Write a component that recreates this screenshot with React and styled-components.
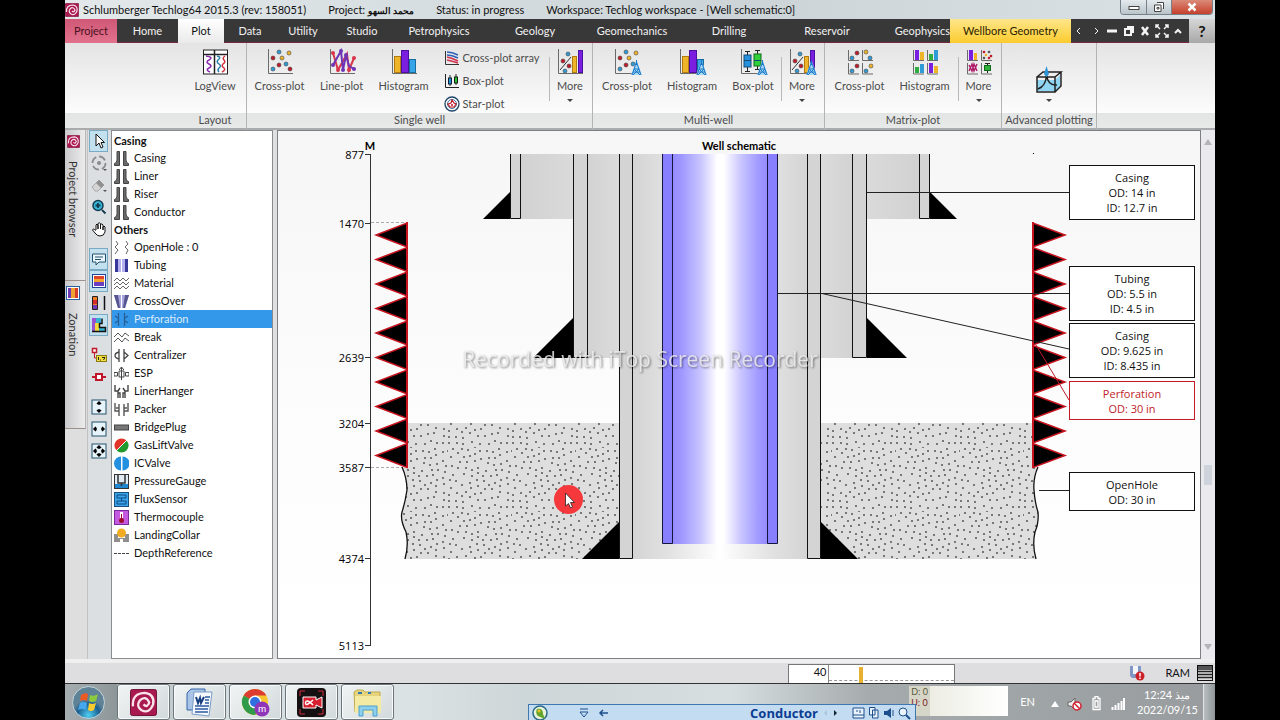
import React, { useState } from "react";
import styled, { createGlobalStyle } from "styled-components";

const GlobalStyle = createGlobalStyle`
  * {
    box-sizing: border-box;
  }
  body {
    margin: 0;
    background: #000;
    font-family: Lato, "Open Sans", sans-serif;
    font-size: 11px;
    line-height: 14px;
    color: #111;
  }
  button {
    margin: 0;
    padding: 0;
    border: 0;
    background: none;
    font: inherit;
    color: inherit;
  }
  ul {
    margin: 0;
    padding: 0;
    list-style: none;
  }
  svg {
    display: block;
    flex: none;
  }
`;

const BLUE = "#2f9bd6";
const RED = "#c01828";
const YELLOW = "#f0b429";
const PURPLE = "#7a1fe0";
const GREEN = "#2fae3f";

/* ---------- ribbon icons ---------- */

const Axes = () => <path d="M1.500 0V24.500H26" fill="none" stroke="#6b6b6b" />;

const Dots = ({ list }) =>
  list.map(([x, y, c]) => <circle key={`${x}-${y}`} cx={x} cy={y} r="2" fill={c} stroke="#444" strokeWidth=".6" />);

const Derrick = () => (
  <g fill="none" stroke="#1878c8">
    <path d="M22.500 11L17 26H28L22.500 11Z" fill="#a9d8f5" stroke="none" />
    <path d="M22.500 11V16M22.500 13L18 26M22.500 13L27 26M20 20H25M19 23H26M20 20L26 26M25 20L19 26" />
  </g>
);

const RibbonSvg = styled.svg`
  width: 26px;
  height: 26px;
  overflow: visible;
`;

const scatter = [
  [12, 3, BLUE], [22, 4, YELLOW], [6, 9, RED], [15, 9, YELLOW], [12, 16, RED],
  [19, 15, BLUE], [6, 20, BLUE], [23, 20, RED],
];

const LogViewIcon = () => (
  <RibbonSvg viewBox="0 0 26 26">
    <rect x="1.500" y="1" width="24" height="24" fill="#fff" stroke="#222" />
    <path d="M1.500 5.500H25.500M12.500 1V25" stroke="#222" strokeWidth="1.500" fill="none" />
    <path d="M4 7q8 1 3 4q-4 2 0 4q4 2 0 4q-4 2 1 4" stroke="#8a2bb0" strokeWidth="1.500" fill="none" />
    <path d="M15 7q5 1 1 4q-2 2 1 4q3 2 0 4q-2 2 0 4" stroke="#2a7fa8" strokeWidth="1.500" fill="none" />
    <path d="M23 7q-3 2-1 4q2 2-1 4q-2 2 1 4q2 2-2 4" stroke="#d03040" strokeWidth="1.500" fill="none" />
  </RibbonSvg>
);

const ScatterIcon = ({ derrick }) => (
  <RibbonSvg viewBox="0 0 26 26">
    <Axes />
    <Dots list={scatter} />
    {derrick && <Derrick />}
  </RibbonSvg>
);

const LinePlotIcon = () => (
  <RibbonSvg viewBox="0 0 26 26">
    <Axes />
    <path d="M4 4L9 21L18 5L20 21L25 9" stroke="#d8344a" strokeWidth="2" fill="none" />
    <path d="M4 16L12 2L14 21L17 6L20 17L25 20" stroke="#6d35b5" strokeWidth="2" fill="none" />
    {[[4, 4], [9, 21], [20, 21], [25, 9]].map(([x, y]) => <circle key={x} cx={x} cy={y} r="2" fill="#d8344a" />)}
    {[[4, 16], [14, 21], [12, 2], [17, 6], [25, 20]].map(([x, y]) => <circle key={x + y} cx={x} cy={y} r="2" fill="#6d35b5" />)}
  </RibbonSvg>
);

const HistogramIcon = ({ derrick }) => (
  <RibbonSvg viewBox="0 0 26 26">
    <Axes />
    <rect x="3.500" y="7.500" width="6" height="16" fill={YELLOW} stroke="#b07c10" />
    <rect x="10.500" y="1.500" width="7" height="22" fill={PURPLE} stroke="#4d0fa0" />
    <rect x="18.500" y="10.500" width="6" height="13" fill="#35a5e8" stroke="#176ca0" />
    {derrick && <Derrick />}
  </RibbonSvg>
);

const BoxPlotIcon = () => (
  <RibbonSvg viewBox="0 0 26 26">
    <Axes />
    <path d="M7.500 2V23M5 2.500H10M5 22.500H10M17.500 1V21M15 1.500H20M15 20.500H20" stroke="#222" fill="none" />
    <rect x="4" y="6" width="7" height="12" fill="#2690dc" stroke="#124a78" />
    <rect x="14" y="5" width="7" height="12" fill="#2fd03a" stroke="#0f6a18" />
    <path d="M4 11.500H11M14 11.500H21" stroke="#124a78" />
    <Derrick />
  </RibbonSvg>
);

const MoreIcon = ({ derrick }) => (
  <RibbonSvg viewBox="0 0 26 26">
    <Axes />
    <Dots list={[[11, 5, BLUE], [6, 12, RED], [12, 17, RED], [8, 22, BLUE]]} />
    <path d="M3 21L14 8" stroke="#333" />
    <rect x="15.500" y="7.500" width="4" height="16" fill={YELLOW} stroke="#b07c10" />
    <rect x="21.500" y="1.500" width="4" height="22" fill={PURPLE} stroke="#4d0fa0" />
    {derrick && <Derrick />}
  </RibbonSvg>
);

const QuadAxes = () => (
  <path d="M1.500 1V11.500H12M15.500 1V11.500H26M1.500 14V25H12M15.500 14V25H26" fill="none" stroke="#6b6b6b" />
);

const MatrixScatterIcon = () => (
  <RibbonSvg viewBox="0 0 26 26">
    <QuadAxes />
    <Dots list={[[5, 9, BLUE], [10, 4, RED], [19, 3, YELLOW], [23, 9, BLUE], [5, 22, BLUE], [10, 17, RED], [19, 22, BLUE], [24, 17, YELLOW]]} />
  </RibbonSvg>
);

const MatrixHistogramIcon = () => (
  <RibbonSvg viewBox="0 0 26 26">
    <QuadAxes />
    {[[3, 1, PURPLE], [8, 3, YELLOW], [17, 5, GREEN], [22, 1, BLUE], [3, 18, GREEN], [8, 15, BLUE], [17, 14, PURPLE], [22, 17, YELLOW]].map(([x, y, c]) => (
      <rect key={`${x}${y}`} x={x} y={y} width="4" height={(y > 12 ? 24 : 11) - y} fill={c} />
    ))}
  </RibbonSvg>
);

const MatrixMoreIcon = () => (
  <RibbonSvg viewBox="0 0 26 26">
    <QuadAxes />
    <rect x="3" y="1" width="4" height="10" fill={PURPLE} />
    <rect x="8" y="4" width="3" height="7" fill={YELLOW} />
    {[[18, 3, RED], [23, 3, "#555"], [20, 6, YELLOW], [25, 7, RED], [18, 9, "#555"], [23, 9, RED]].map(([x, y, c]) => (
      <circle key={`${x}${y}`} cx={x} cy={y} r="1.300" fill={c} />
    ))}
    <path d="M3 16L6 22L8 15L11 22M3 22L6 15L8 22L11 15" stroke="#b01868" strokeWidth="1.400" fill="none" />
    <path d="M21.500 14V24M19 14.500H24" stroke="#222" />
    <rect x="18.500" y="16.500" width="6" height="5" fill="#2fb03a" stroke="#0f6a18" />
  </RibbonSvg>
);

const CubeIcon = () => (
  <RibbonSvg viewBox="0 0 26 26">
    <path d="M1 13H19L24 8V19L19 24H1Z" fill="#8fd4f0" />
    <path d="M1 10H19V25H1ZM1 10L7 5H25L19 10M25 5V19L19 25" fill="none" stroke="#222" strokeWidth="1.500" />
    <path d="M2 22Q10 19 10.500 8Q12 19 21 18" fill="none" stroke="#222" strokeWidth="1.500" />
    <path d="M10.500 -1L8 7L10.500 10L13 7Z" fill="#2b95d8" />
  </RibbonSvg>
);

const CrossArrayIcon = () => (
  <svg width="16" height="16" viewBox="0 0 16 16">
    <path d="M1.500 1V14.500H15" fill="none" stroke="#333" />
    <path d="M3 2Q8 2 14 5M3 5Q8 5 14 8" stroke="#2b62b8" strokeWidth="1.500" fill="none" />
    <path d="M3 7Q8 8 14 11M3 10Q8 11 14 13" stroke="#d0304a" strokeWidth="1.500" fill="none" />
  </svg>
);

const SmallBoxIcon = () => (
  <svg width="16" height="16" viewBox="0 0 16 16">
    <path d="M1.500 1V14.500H15M6 2V13M12 1V12" fill="none" stroke="#222" />
    <rect x="4.500" y="5" width="3" height="6" fill="#2690dc" stroke="#123" />
    <rect x="10.500" y="4" width="3" height="6" fill="#2fc03a" stroke="#121" />
  </svg>
);

const StarPlotIcon = () => (
  <svg width="16" height="16" viewBox="0 0 16 16">
    <circle cx="8" cy="8" r="7" fill="#fff" stroke="#1d4468" strokeWidth="1.300" />
    <circle cx="8" cy="8" r="4.500" fill="none" stroke="#3b6c98" />
    <path d="M8 4L10 7L12 8L10 11L6 11L4 8L7 7Z" fill="none" stroke={RED} strokeWidth="1.200" />
    <circle cx="8" cy="9" r="1" fill={RED} />
  </svg>
);

const SwirlIcon = ({ size = 14 }) => (
  <svg width={size} height={size} viewBox="0 0 14 14">
    <rect x=".25" y=".25" width="13.500" height="13.500" rx="1" fill="#a8194f" stroke="#6e1034" strokeWidth=".5" />
    <path d="M1.500 9Q1 2 8 2Q13 3 12 8Q10 13 6 11Q3 9 5 6Q8 3 10 7Q9 10 7 8" fill="none" stroke="#fbe3ea" strokeWidth="1.200" />
  </svg>
);

/* ---------- frame ---------- */

const Window = styled.div`
  display: flex;
  flex-direction: column;
  min-height: 100vh;
  margin: 0 65px;
  background: #dfdfe2;
`;

const TitleBar = styled.header`
  display: flex;
  align-items: center;
  height: 19px;
  background: linear-gradient(90deg, #e3e9eb, #d3dadd 40%, #ccd4d8 60%, #dbe2e5);
`;

const TitleText = styled.span`
  margin-left: ${(props) => props.$gap}px;
  white-space: nowrap;
  b {
    font-size: 9px;
    line-height: 1;
  }
`;

const WindowButtons = styled.div`
  display: flex;
  align-self: flex-start;
  height: 15px;
  margin-left: auto;
  margin-right: 2px;
  border: 1px solid #76828a;
  border-top: 0;
  border-radius: 0 0 4px 4px;
  overflow: hidden;
`;

const WindowButton = styled.button`
  display: flex;
  align-items: center;
  justify-content: center;
  width: ${(props) => (props.$close ? 41 : 25)}px;
  background: ${(props) => (props.$close ? "linear-gradient(#dc8a78, #c4402c)" : "linear-gradient(#e4eaed, #b9c4ca)")};
  & + & {
    border-left: 1px solid #76828a;
  }
`;

const MenuBar = styled.nav`
  display: flex;
  height: 24px;
  background: #393839;
  color: #f2f2f2;
  box-shadow: inset 0 -1px #7a2540;
`;

const tabLook = {
  project: "background: linear-gradient(#cf5876, #e2718c); color: #4a0f20;",
  active: "background: linear-gradient(#fff, #eaeaea); color: #111;",
  context: "background: linear-gradient(#ffe68a, #fbcb2e); color: #2a2200;",
};

const MenuTab = styled.button`
  flex: ${(props) => props.$size} 1 0;
  min-width: 0;
  padding-bottom: 1px;
  overflow: hidden;
  white-space: nowrap;
  text-align: ${(props) => (props.$end ? "right" : "center")};
  ${(props) => tabLook[props.$look]}
`;

const MenuTools = styled.div`
  display: flex;
  flex: none;
  align-items: center;
  justify-content: space-between;
  width: 118px;
  padding: 0 4px 0 1px;
`;

const HelpButton = styled.button`
  flex: none;
  width: 26px;
  background: linear-gradient(#d6d6d6, #a8a8a8);
  color: #111;
  font-size: 16px;
  font-weight: 700;
`;

const Ribbon = styled.section`
  display: flex;
  height: 87px;
  padding-left: 119px;
  background: linear-gradient(#e4e4e4, #f0f0f0 40%, #fcfcfc 80%, #e3e5e5 81%, #e8eaea 98%, #a9abad 98%);
  color: #4c4c4c;
`;

const Group = styled.div`
  width: ${(props) => props.$width}px;
  border-right: 1px solid #b4b4b4;
`;

const GroupBody = styled.div`
  display: flex;
  justify-content: center;
  height: 70px;
`;

const GroupLabel = styled.div`
  text-align: center;
  white-space: nowrap;
`;

const Tool = styled.button`
  display: flex;
  flex-direction: column;
  align-items: center;
  gap: 4px;
  width: ${(props) => props.$width}px;
  padding-top: ${(props) => (props.$low ? 24 : 6)}px;
  white-space: nowrap;
`;

const Caret = styled.span`
  margin-top: 2px;
  border: 3px solid transparent;
  border-top-color: #444;
`;

const Divider = styled.span`
  width: 1px;
  margin: 14px 0 12px;
  background: #b9b9b9;
`;

const SmallTools = styled.div`
  width: 114px;
  padding: 3px 0 0 9px;
`;

const SmallTool = styled.button`
  display: flex;
  align-items: center;
  gap: 3px;
  height: 23px;
  white-space: nowrap;
`;

/* ---------- workspace ---------- */

const Workspace = styled.main`
  display: flex;
  flex: 1;
`;

const DockTabs = styled.div`
  display: flex;
  flex-direction: column;
  width: 23px;
  padding-right: 1px;
  background: #dededf;
  border-right: 1px solid #c2c2c4;
`;

const DockTab = styled.button`
  display: flex;
  flex-direction: column;
  align-items: center;
  gap: 13px;
  height: ${(props) => (props.$first ? 151 : 148)}px;
  padding: 5px 4px 0 0;
  border-bottom: 1px solid #9c8f8c;
  border-right: 1px solid #b5b5b5;
  background: linear-gradient(90deg, #c9c9cb, #ececed);
  color: #333;
  span {
    writing-mode: vertical-rl;
    white-space: nowrap;
  }
`;

const Tools = styled.div`
  display: flex;
  flex-direction: column;
  gap: 8px;
  width: 23px;
  padding: 0 1px;
  background: #dcdfe2;
`;

const ToolButton = styled.button`
  display: flex;
  align-items: center;
  justify-content: center;
  width: 19px;
  height: 22px;
  border: 1px solid ${(props) => (props.$on ? "#7aa9c4" : "transparent")};
  background: ${(props) => (props.$on ? "#c3e0ef" : "transparent")};
`;

const ItemPanel = styled.aside`
  width: 162px;
  margin-right: 4px;
  padding-top: 1px;
  border: 1px solid #8a8c8e;
  background: #fff;
`;

const ItemHeading = styled.h2`
  margin: 0;
  padding-left: 2px;
  font-size: 11px;
  line-height: 17px;
`;

const Item = styled.button`
  display: flex;
  align-items: center;
  gap: 5px;
  width: 100%;
  height: 18px;
  padding-left: 2px;
  white-space: nowrap;
  background: ${(props) => (props.$selected ? "#3397ea" : "none")};
  color: ${(props) => (props.$selected ? "#d9ecfb" : "#111")};
`;

const Canvas = styled.section`
  flex: 1;
  min-width: 0;
  border: 1px solid #7d8083;
  background: linear-gradient(#f6f6f6, #fdfdfd 60%, #fff);
  svg {
    width: 100%;
    height: auto;
  }
`;

const ScrollTrack = styled.div`
  display: flex;
  flex-direction: column;
  align-items: center;
  justify-content: space-between;
  width: 14px;
  padding: 5px 0;
  background: #e9e9ee;
`;

const ScrollArrow = styled.button`
  border: 4px solid transparent;
  border-${(props) => (props.$up ? "bottom" : "top")}: 6px solid #b3b3b8;
`;

const ScrollThumb = styled.span`
  width: 8px;
  height: 20px;
  margin-top: 160px;
  background: #cfd3dc;
`;

const StatusBar = styled.footer`
  display: flex;
  align-items: center;
  justify-content: flex-end;
  height: 25px;
  padding: 4px 2px 0 0;
  border-bottom: 1px solid #333;
  background: linear-gradient(#efeff0 4px, #dedee1 4px);
`;

const ScaleBox = styled.div`
  display: flex;
  align-self: flex-end;
  width: 167px;
  height: 19px;
  margin-right: 174px;
  border: 1px solid #777;
  border-bottom: 0;
  background: #fff;
`;

const ScaleValue = styled.span`
  width: 40px;
  padding-right: 2px;
  border-right: 1px solid #888;
  text-align: right;
`;

const ScalePlot = styled.span`
  flex: 1;
  margin-bottom: 2px;
  padding: 2px 0 0 30px;
  border-bottom: 1px dashed #999;
  i {
    display: block;
    width: 4px;
    height: 16px;
    background: #e8b030;
  }
`;

const StatusButton = styled.button`
  display: flex;
  align-items: center;
  gap: 7px;
  margin-left: ${(props) => props.$gap || 0}px;
`;

/* ---------- desktop taskbar ---------- */

const Taskbar = styled.footer`
  position: relative;
  display: flex;
  height: 36px;
  background: linear-gradient(90deg, #9da5a8 0, #d6dfe0 14%, #dbe2e3 30%, #cdd6d8 40%, #d7dedf 58%, #a5abad 70%, #989c9e);
`;

const StartButton = styled.button`
  display: flex;
  align-items: center;
  justify-content: center;
  width: 52px;
  padding-right: 6px;
  background: linear-gradient(90deg, #a5adb0, #8d9699);
`;

const TaskButton = styled.button`
  display: flex;
  align-items: center;
  justify-content: center;
  width: 53px;
  margin-right: 3px;
  border: 1px solid #6d777b;
  border-radius: 3px;
  background: linear-gradient(135deg, #f1f4f4, #d2d9da);
  box-shadow: inset 0 0 0 1px #f8fafa;
`;

const Tray = styled.div`
  display: flex;
  align-items: center;
  margin-left: auto;
  color: #fff;
`;

const NetMeter = styled.div`
  display: flex;
  align-self: flex-start;
  width: 99px;
  height: 30px;
  margin: 2px 12px 0 0;
  background: linear-gradient(90deg, #e8e8dc, #fff);
  color: #5a5a3a;
  font-size: 9px;
  line-height: 11px;
`;

const NetRates = styled.div`
  display: flex;
  flex-direction: column;
  width: 21px;
  padding-left: 2px;
  background: #d6d6c8;
  white-space: nowrap;
  span + span {
    color: #7c1420;
  }
`;

const TrayIcons = styled.div`
  display: flex;
  align-items: center;
  gap: 8px;
  margin: 3px 12px 0 16px;
`;

const Clock = styled.time`
  width: 60px;
  margin-right: 6px;
  text-align: center;
  line-height: 15px;
  white-space: nowrap;
`;

const ShowDesktop = styled.button`
  align-self: stretch;
  width: 12px;
  border-left: 1px solid #dfe3e4;
  background: linear-gradient(90deg, #b9bec0, #8f9496);
`;

/* floats over the taskbar */
const WordBar = styled.div`
  position: absolute;
  left: 463px;
  bottom: 0;
  display: flex;
  align-items: center;
  gap: 5px;
  width: 388px;
  height: 16px;
  padding: 0 3px;
  border: 1px solid #3f78b0;
  border-bottom: 0;
  background: #c4dcf2;
  color: #0b3d91;
`;

const WordField = styled.span`
  flex: 1;
  text-align: right;
  font-family: "Open Sans", sans-serif;
  font-size: 13px;
  font-weight: 700;
`;

/* ---------- list icons ---------- */

const pipes = <path d="M3 .5H5.500V14.500H.5V12.500Q3 12 3 9ZM9.500 .5H12V9Q12 12 14.500 12.500V14.500H9.500Z" fill="#6a6a6a" stroke="#444" />;

const itemIcons = {
  Casing: pipes,
  Liner: pipes,
  Riser: pipes,
  Conductor: pipes,
  "OpenHole : 0": <path d="M2 1L4 4L1 7L4 10L1 14M12 1L14 4L11 7L14 10L12 14" fill="none" stroke="#666" />,
  Tubing: (
    <>
      <path d="M1 1H14V14H1Z" fill="#b5b1f0" />
      <path d="M1 1H4V14H1ZM11 1H14V14H11Z" fill="#38389a" />
      <path d="M7 1H8V14H7Z" fill="#fff" />
    </>
  ),
  Material: <path d="M0 5L3 2L6 5L9 2L12 5L15 2M0 9L3 6L6 9L9 6L12 9L15 6M0 13L3 10L6 13L9 10L12 13L15 10" fill="none" stroke="#666" />,
  CrossOver: (
    <>
      <path d="M0 1H15L11 14H4Z" fill="#a9a7dd" />
      <path d="M0 1H4L6 14H4ZM15 1H11L9 14H11Z" fill="#55558f" />
      <path d="M7 1H8V14H7Z" fill="#fff" />
    </>
  ),
  Perforation: <path d="M4.500 1V14M1 4L4 6M1 11L4 9M10.500 1V14M14 4L11 6M14 11L11 9" fill="none" stroke="#255f95" strokeWidth="1.300" />,
  Break: <path d="M0 7L4 3L8 7L11 3L15 6M0 12L4 8L8 12L11 8L15 11" fill="none" stroke="#555" />,
  Centralizer: <path d="M5 1V14M10 1V14M5 4Q1 5 1 7.500Q1 10 5 11M10 4L14 7.500L10 11" fill="none" stroke="#444" strokeWidth="1.300" />,
  ESP: <path d="M7.500 1V14M5 5H10V11H5ZM5 4L7.500 1L10 4M0 6.500H3.500V10H0ZM11.500 6.500H15V10H11.500Z" fill="none" stroke="#444" />,
  LinerHanger: <path d="M1 1V7H4V14M4 7L6 4M14 1V7H11V14M11 7L9 4M4 9H6V14M11 9H9V14" fill="none" stroke="#444" strokeWidth="1.400" />,
  Packer: <path d="M1 1V9H5V14M5 2V9M14 1V9H10V14M10 2V9M2 6H5M10 6H13" fill="none" stroke="#555" strokeWidth="1.400" />,
  BridgePlug: <rect x=".5" y="5" width="14" height="5" fill="#777" stroke="#444" />,
  GasLiftValve: (
    <>
      <path d="M12.500 2.500A7 7 0 0 0 2.500 12.500Z" fill="#e2352a" />
      <path d="M12.500 2.500A7 7 0 0 1 2.500 12.500Z" fill="#22992c" />
      <path d="M1 14L14 1" stroke="#fff" />
    </>
  ),
  ICValve: <path d="M7 .5A7 7 0 0 0 7 14.500ZM8.500 .5A7 7 0 0 1 8.500 14.500Z" fill="#2490e0" />,
  PressureGauge: (
    <>
      <rect x=".5" y=".5" width="14" height="14" fill="#dfeaf2" stroke="#333" />
      <path d="M1 10H14V14H1Z" fill="#1f86d0" />
      <path d="M4 1V9H11V1M7.500 9V12" fill="none" stroke="#333" strokeWidth="1.500" />
    </>
  ),
  FluxSensor: (
    <>
      <rect x=".5" y=".5" width="14" height="14" fill="#3ba4ea" stroke="#1c4f78" />
      <path d="M3 3H12V6H3ZM3 9H12V12H3ZM7.500 6V9" fill="none" stroke="#0e4b80" />
    </>
  ),
  Thermocouple: (
    <>
      <rect x=".5" y=".5" width="14" height="14" fill="#c45ae0" stroke="#7a2a98" />
      <path d="M6 2H9V8H6Z" fill="#fff" />
      <path d="M7 4H8V9H7Z" fill="#a00c30" />
      <circle cx="7.500" cy="10.500" r="2.500" fill="#a00c30" />
    </>
  ),
  LandingCollar: (
    <>
      <path d="M0 6H4V10H11V6H15V14H9V11H6V14H0Z" fill="#8f8f8f" />
      <circle cx="7.500" cy="5" r="4.500" fill="#f2ac22" />
    </>
  ),
  DepthReference: <path d="M0 7.500H15" stroke="#444" strokeDasharray="3 1" />,
};

const casingItems = ["Casing", "Liner", "Riser", "Conductor"];
const otherItems = Object.keys(itemIcons).slice(4);

/* ---------- toolbar icons ---------- */

const arrows = {
  v: "M8 3V6M8 13V10M6 5L8 3L10 5M6 11L8 13L10 11",
  h: "M3 8H6M13 8H10M5 6L3 8L5 10M11 6L13 8L11 10",
};

const FitFrame = ({ d }) => (
  <>
    <rect x="1" y="1" width="14" height="14" fill="#e6f3f9" stroke="#24506a" />
    <path d={d} stroke="#000" strokeWidth="1.500" fill="none" />
  </>
);

const Bands = () => (
  <>
    <rect x="1.500" y="1.500" width="13" height="13" fill="#fff" stroke="#24449a" />
    <path d="M3 3H13V6H3Z" fill="#e0442c" />
    <path d="M3 6H13V9H3Z" fill="#f5a52c" />
    <path d="M3 9H13V13H3Z" fill="#6a3fc0" />
  </>
);

const toolGroups = [
  [
    { name: "Select", on: true, icon: <path d="M5 1V13L8 10L10 15L12 14L10 9.500H13.500Z" fill="#fff" stroke="#111" /> },
    {
      name: "Target",
      icon: (
        <>
          <circle cx="8" cy="8" r="6.500" fill="none" stroke="#8b8b8b" strokeWidth="1.800" strokeDasharray="7 3" />
          <circle cx="8" cy="8" r="2" fill="#8b8b8b" />
          <path d="M12 14H16L14 16Z" fill="#555" />
        </>
      ),
    },
    {
      name: "Erase",
      icon: (
        <>
          <path d="M1 10L8 3L13 8L7 14H4Z" fill="#d4d4d4" stroke="#aaa" />
          <path d="M8 3L13 8L10 11L5 6Z" fill="#8f8f8f" />
          <path d="M12 13H16L14 15Z" fill="#555" />
        </>
      ),
    },
    {
      name: "Zoom",
      icon: (
        <>
          <circle cx="7" cy="6.500" r="5" fill="#35b6d8" stroke="#143c50" strokeWidth="1.500" />
          <path d="M11 11L14.500 14.500M7 4V9M4.500 6.500H9.500" stroke="#143c50" strokeWidth="1.800" />
        </>
      ),
    },
    {
      name: "Pan",
      icon: <path d="M5 9V4Q6 2 7 4V8V2.500Q8 1 9.500 2.500V8V3.500Q11 2 12 4V9V6Q13 4 14 6V11Q13 15 9 15Q6 15 4 12L1.500 9Q2 7 5 9.500" fill="#fff" stroke="#111" />,
    },
  ],
  [
    { name: "Annotations", on: true, icon: <path d="M1.500 3H14.500V11H8L5 14V11H1.500ZM4 6H12M4 8.500H10" fill="#e9f7fd" stroke="#22506a" /> },
    { name: "Zones", on: true, icon: <Bands /> },
    {
      name: "Split",
      icon: (
        <>
          <path d="M1.500 1.500H6.500V14.500H1.500Z" fill="#f07a24" stroke="#222" />
          <path d="M2 5H6V9H2Z" fill="#d42b2b" />
          <path d="M2 10H6V14H2Z" fill="#7039b5" />
          <path d="M13.500 1V15" stroke="#111" strokeWidth="1.500" />
        </>
      ),
    },
    {
      name: "Colors",
      on: true,
      icon: (
        <>
          <path d="M1 1H10V6H8V10H14V14H1Z" fill="#36b0d0" />
          <path d="M1 1H5V14H1Z" fill="#9b50d0" />
          <path d="M4 6H8V14H4Z" fill="#f0d838" />
          <path d="M1 14.500H14.500V10.500H8.500V6.500H11V1.500" fill="none" stroke="#111" strokeWidth="1.500" />
        </>
      ),
    },
  ],
  [
    {
      name: "Values",
      icon: (
        <>
          <rect x="1.500" y="1.500" width="4" height="4" fill="#fff" stroke={RED} strokeWidth="1.500" />
          <path d="M3.500 6V11H6" stroke={RED} fill="none" />
          <rect x="5.500" y="8.500" width="10" height="6" fill="#f3e03c" stroke="#8a7c10" />
          <path d="M7.500 10V13M9 13H10M11 10.500H14L12.500 13" stroke="#222" fill="none" />
        </>
      ),
    },
    { name: "Node", icon: <path d="M1 8H5M11 8H15M5 5H11V11H5Z" fill="#fff" stroke={RED} strokeWidth="2" /> },
  ],
  [
    { name: "Fit height", icon: <FitFrame d={arrows.v} /> },
    { name: "Fit width", icon: <FitFrame d={arrows.h} /> },
    { name: "Fit all", icon: <FitFrame d={arrows.v + arrows.h} /> },
  ],
];

/* ---------- well schematic ---------- */

const TILE = 64;

// scattered points that wrap round the tile edges
const grains = (() => {
  let seed = 7;
  const rand = () => {
    seed = (seed * 16807) % 2147483647;
    return (seed / 2147483647) * TILE;
  };
  const wrap = (d) => Math.min(Math.abs(d), TILE - Math.abs(d));
  const out = [];
  for (let i = 0; i < 8000; i++) {
    const x = rand();
    const y = rand();
    if (out.every(([a, b]) => Math.hypot(wrap(a - x), wrap(b - y)) > 5.5)) out.push([x, y]);
  }
  return out.map(([x, y]) => [Math.floor(x), Math.floor(y)]);
})();

const depths = [[877, 154], [1470, 223], [2639, 357], [3204, 423], [3587, 467], [4374, 558], [5113, 645]];

const casings = [
  { left: 510, right: 930, wall: 11, bottom: 219, shoe: 27 },
  { left: 573, right: 867, wall: 15, bottom: 358, shoe: 40 },
  { left: 619, right: 821, wall: 14, bottom: 559, shoe: 37 },
];

const callouts = [
  { y: 165, lines: ["Casing", "OD: 14 in", "ID: 12.7 in"] },
  { y: 266, lines: ["Tubing", "OD: 5.5 in", "ID: 4.5 in"] },
  { y: 323, lines: ["Casing", "OD: 9.625 in", "ID: 8.435 in"] },
  { y: 381, lines: ["Perforation", "OD: 30 in"], color: "#c01c2a" },
  { y: 472, lines: ["OpenHole", "OD: 30 in"] },
];

const SvgText = styled.text`
  font-family: "Open Sans", sans-serif;
  font-size: 11px;
  text-anchor: ${(props) => props.$anchor || "middle"};
`;

const SvgTitle = styled.text`
  font-size: 11px;
  font-weight: 700;
  text-anchor: middle;
`;

const Watermark = styled(SvgText)`
  font-size: 21px;
  fill: #f2f2f2;
  fill-opacity: 0.8;
  filter: drop-shadow(1px 1px 1px rgba(0, 0, 0, 0.6));
`;

const CasingShape = ({ left, right, wall, bottom, shoe }) => (
  <g>
    <rect x={left} y="154" width={right - left} height={bottom - 154} fill="url(#steel)" />
    {[left, right - wall].map((x) => (
      <path key={x} d={`M${x + 0.5} 154V${bottom - 0.5}H${x + wall - 0.5}V154`} fill="#d4d4d4" stroke="#111" />
    ))}
    <path d={`M${left} ${bottom}H${left - shoe}L${left} ${bottom - shoe}ZM${right} ${bottom}H${right + shoe}L${right} ${bottom - shoe}Z`} />
  </g>
);

const Perforations = ({ base, tip }) => (
  <g stroke="#c8141e" strokeWidth="1.500">
    {Array.from({ length: 10 }, (_, i) => 223 + i * 24.5).map((y) => (
      <path key={y} d={`M${base} ${y}V${y + 24}L${tip} ${y + 12}Z`} />
    ))}
    <path d={`M${base} 222V468`} strokeWidth="2" />
  </g>
);

const WellSchematic = () => (
  <svg viewBox="278 131 922 527" role="img" aria-label="Well schematic">
    <defs>
      <linearGradient id="steel">
        <stop offset="0" stopColor="#cfcfcf" />
        <stop offset=".25" stopColor="#e2e2e2" />
        <stop offset=".5" stopColor="#fff" />
        <stop offset=".75" stopColor="#e2e2e2" />
        <stop offset="1" stopColor="#cfcfcf" />
      </linearGradient>
      <linearGradient id="tube">
        <stop offset="0" stopColor="#938aff" />
        <stop offset=".1" stopColor="#9f98ff" />
        <stop offset=".3" stopColor="#c9c5ff" />
        <stop offset=".47" stopColor="#fff" />
        <stop offset=".54" stopColor="#fff" />
        <stop offset=".72" stopColor="#c9c5ff" />
        <stop offset=".9" stopColor="#a19aff" />
        <stop offset="1" stopColor="#938aff" />
      </linearGradient>
      <pattern id="grains" width={TILE} height={TILE} patternUnits="userSpaceOnUse">
        <rect width={TILE} height={TILE} fill="#dedede" />
        {grains.map(([x, y]) => (
          <rect key={`${x}-${y}`} x={x} y={y} width="2" height="2" fill="#777" />
        ))}
      </pattern>
    </defs>

    <SvgTitle x="370" y="150">M</SvgTitle>
    <SvgTitle x="739" y="150">Well schematic</SvgTitle>
    <path d="M370.500 154V645" stroke="#333" />
    {depths.map(([label, y]) => (
      <g key={label}>
        <path d={`M365 ${y + 0.5}H371`} stroke="#333" />
        <SvgText x="364" y={y + 5} $anchor="end">{label}</SvgText>
      </g>
    ))}
    <path d="M371 222.500H406M371 467.500H406" stroke="#aaa" strokeDasharray="3 2" />

    <path
      d="M407 423H1034V467H1038Q1033 478 1034 490Q1035 503 1038 512Q1039 523 1035 532Q1032 545 1036 559H405Q409 545 406 532Q400 520 402 512Q405 503 407 490Q407 478 402 467H407Z"
      fill="url(#grains)"
    />
    <path
      d="M402 467Q407 478 407 490Q405 503 402 512Q400 520 406 532Q409 545 405 559M1038 467Q1033 478 1034 490Q1035 503 1038 512Q1039 523 1035 532Q1032 545 1036 559"
      fill="none"
      stroke="#111"
      strokeWidth="1.300"
    />

    {casings.map((c) => <CasingShape key={c.left} {...c} />)}

    <rect x="672" y="154" width="96" height="390" fill="url(#tube)" />
    <path d="M662.500 154V543.500H672.500V154M767.500 154V543.500H777.500V154" fill="#887fff" stroke="#16163c" />

    <Perforations base={407} tip={376} />
    <Perforations base={1033} tip={1065} />

    <rect x="1033" y="153" width="1" height="1" />
    <path d="M867 192.500H1069M778 293.500H1069M822 293.500L1069 349M1039 490.500H1069" fill="none" stroke="#222" />
    <path d="M1036 345L1069 400" stroke="#c01c2a" />

    {callouts.map(({ y, lines, color = "#111" }) => (
      <g key={y} fill={color}>
        <rect x="1069.500" y={y + 0.5} width="125" height={lines.length * 16 + 6} fill="#fff" stroke={color} />
        {lines.map((line, i) => (
          <SvgText key={line} x="1132" y={y + 17 + i * 15}>{line}</SvgText>
        ))}
      </g>
    ))}

    <Watermark x="640" y="367">Recorded with iTop Screen Recorder</Watermark>

    <circle cx="568.500" cy="499.500" r="14.500" fill="#f5383c" />
    <path d="M565.500 493V506L568.500 503.500L570.500 508L572.500 507L570.500 502.500H574.500Z" fill="#fff" stroke="#222" strokeWidth=".8" />
  </svg>
);

/* ---------- data for the bars ---------- */

const tabs = [
  { name: "Project", size: 52, look: "project" },
  { name: "Home", size: 61 },
  { name: "Plot", size: 46, look: "active" },
  { name: "Data", size: 52 },
  { name: "Utility", size: 54 },
  { name: "Studio", size: 64 },
  { name: "Petrophysics", size: 90 },
  { name: "Geology", size: 102 },
  { name: "Geomechanics", size: 92 },
  { name: "Drilling", size: 102 },
  { name: "Reservoir", size: 94 },
  { name: "Geophysics", size: 76, end: true },
  { name: "Wellbore Geometry", size: 121, look: "context" },
];

const menuIcons = [
  ["Previous", "M8 4L5 7L8 10", 1],
  ["Next", "M6 4L9 7L6 10", 1],
  ["Minimize", "M2 7H12", 3],
  ["Restore", "M5 3H11V9M3 5H9V11H3Z", 2],
  ["Close", "M4 3L10 11M10 3L4 11", 2.5],
  ["Full screen", "M1 4V1H4M10 1H13V4M13 10V13H10M4 13H1V10M1 1L5 5M13 1L9 5M13 13L9 9M1 13L5 9", 1.5],
  ["Collapse", "M4 9L7 6L10 9", 2],
];

const MoreTool = ({ width, children }) => (
  <Tool $width={width}>
    {children}
    More
    <Caret />
  </Tool>
);

const TitleRow = () => (
  <TitleBar>
    <SwirlIcon />
    <TitleText $gap={4}>Schlumberger Techlog64 2015.3 (rev: 158051)</TitleText>
    <TitleText $gap={22}>Project: <b>محمد السهو</b></TitleText>
    <TitleText $gap={22}>Status: in progress</TitleText>
    <TitleText $gap={22}>Workspace: Techlog workspace - [Well schematic:0]</TitleText>
    <WindowButtons>
      <WindowButton aria-label="Minimize">
        <svg width="12" height="8"><rect x="1" y="3.500" width="10" height="3" fill="#fff" stroke="#444" /></svg>
      </WindowButton>
      <WindowButton aria-label="Restore">
        <svg width="12" height="12"><path d="M4 1.500H10.500V8M1.500 4H8V10.500H1.500ZM4 6.500H6V8H4Z" fill="#fff" stroke="#444" /></svg>
      </WindowButton>
      <WindowButton $close aria-label="Close">
        <svg width="12" height="10"><path d="M2.500 1.500L9.500 8.500M9.500 1.500L2.500 8.500" stroke="#fff" strokeWidth="2.500" /></svg>
      </WindowButton>
    </WindowButtons>
  </TitleBar>
);

const MenuRow = () => (
  <MenuBar>
    {tabs.map((t) => (
      <MenuTab key={t.name} $size={t.size} $look={t.look} $end={t.end}>{t.name}</MenuTab>
    ))}
    <MenuTools>
      {menuIcons.map(([name, d, w]) => (
        <button key={name} aria-label={name}>
          <svg width="14" height="14"><path d={d} fill="none" stroke="#f4f4f4" strokeWidth={w} /></svg>
        </button>
      ))}
    </MenuTools>
    <HelpButton>?</HelpButton>
  </MenuBar>
);

const RibbonRow = () => (
  <Ribbon>
    <Group $width={63}>
      <GroupBody>
        <Tool $width={60}><LogViewIcon />LogView</Tool>
      </GroupBody>
      <GroupLabel>Layout</GroupLabel>
    </Group>
    <Group $width={346}>
      <GroupBody>
        <Tool $width={62}><ScatterIcon />Cross-plot</Tool>
        <Tool $width={62}><LinePlotIcon />Line-plot</Tool>
        <Tool $width={62}><HistogramIcon />Histogram</Tool>
        <SmallTools>
          <SmallTool><CrossArrayIcon />Cross-plot array</SmallTool>
          <SmallTool><SmallBoxIcon />Box-plot</SmallTool>
          <SmallTool><StarPlotIcon />Star-plot</SmallTool>
        </SmallTools>
        <Divider />
        <MoreTool width={41}><MoreIcon /></MoreTool>
      </GroupBody>
      <GroupLabel>Single well</GroupLabel>
    </Group>
    <Group $width={232}>
      <GroupBody>
        <Tool $width={64}><ScatterIcon derrick />Cross-plot</Tool>
        <Tool $width={66}><HistogramIcon derrick />Histogram</Tool>
        <Tool $width={56}><BoxPlotIcon />Box-plot</Tool>
        <Divider />
        <MoreTool width={40}><MoreIcon derrick /></MoreTool>
      </GroupBody>
      <GroupLabel>Multi-well</GroupLabel>
    </Group>
    <Group $width={177}>
      <GroupBody>
        <Tool $width={64}><MatrixScatterIcon />Cross-plot</Tool>
        <Tool $width={66}><MatrixHistogramIcon />Histogram</Tool>
        <Divider />
        <MoreTool width={40}><MatrixMoreIcon /></MoreTool>
      </GroupBody>
      <GroupLabel>Matrix-plot</GroupLabel>
    </Group>
    <Group $width={95}>
      <GroupBody>
        <Tool $width={60} $low aria-label="Advanced plotting"><CubeIcon /><Caret /></Tool>
      </GroupBody>
      <GroupLabel>Advanced plotting</GroupLabel>
    </Group>
  </Ribbon>
);

const ItemList = ({ names, selected, onSelect }) => (
  <ul>
    {names.map((name) => (
      <li key={name}>
        <Item $selected={name === selected} onClick={() => onSelect(name)}>
          <svg width="15" height="15" viewBox="0 0 15 15">{itemIcons[name]}</svg>
          {name}
        </Item>
      </li>
    ))}
  </ul>
);

const StatusRow = () => (
  <StatusBar>
    <ScaleBox>
      <ScaleValue>40</ScaleValue>
      <ScalePlot><i /></ScalePlot>
    </ScaleBox>
    <StatusButton aria-label="Messages">
      <svg width="16" height="16">
        <path d="M1 1H12V10L8 13H3L1 11Z" fill="#8196c4" />
        <path d="M4 1H9V9H4Z" fill="#f4f6fa" />
        <circle cx="11" cy="11" r="4.500" fill="#cc1f28" />
        <path d="M11 8V11.500M11 12.500V14" stroke="#fff" strokeWidth="1.500" />
      </svg>
    </StatusButton>
    <StatusButton $gap={20}>
      RAM
      <svg width="16" height="16">
        <rect x=".5" y=".5" width="15" height="15" fill="#ddd" stroke="#111" />
        <path d="M1 1H15V5H1Z" fill="#555" />
        <path d="M1 6.500H15M1 9.500H15M1 12.500H15" stroke="#222" strokeWidth="1.500" />
      </svg>
    </StatusButton>
  </StatusBar>
);

const taskIcons = {
  Techlog: <SwirlIcon size={27} />,
  Word: (
    <svg width="29" height="29" viewBox="0 0 29 29">
      <path d="M2 5L6 1H20V22H2Z" fill="#a9c4e6" stroke="#3566a8" />
      <path d="M9 4H27L24 28L7 26Z" fill="#f6f9fd" stroke="#7a9cc8" />
      <path d="M11 9L13 15L15 10L16 15L19 9" stroke="#173f80" strokeWidth="2" fill="none" />
      <path d="M20 9H25M20 12H24M20 15H24M10 18H24M10 21H23M10 24H23" stroke="#2c5aa0" strokeWidth="1.500" />
    </svg>
  ),
  Chrome: (
    <svg width="29" height="29" viewBox="0 0 29 29">
      <circle cx="14" cy="14" r="13" fill="#f6c62c" />
      <path d="M14 14L2.700 7.500A13 13 0 0 1 25.300 7.500H14Z" fill="#dd3b30" />
      <path d="M14 14L2.700 7.500A13 13 0 0 0 14 27L19 18Z" fill="#2f9a48" />
      <circle cx="14" cy="14" r="6.500" fill="#fff" />
      <circle cx="14" cy="14" r="5" fill="#2f6fe0" />
      <circle cx="21" cy="21" r="7.500" fill="#9036b8" />
      <text x="21" y="24" fontSize="10" textAnchor="middle" fill="#fff">m</text>
    </svg>
  ),
  Recorder: (
    <svg width="29" height="29" viewBox="0 0 29 29">
      <rect width="29" height="29" rx="4" fill="#151113" />
      <path d="M3 8V3H8M21 3H26V8M26 21V26H21M8 26H3V21" fill="none" stroke="#d02838" />
      <path d="M6 9H19V12L25 9V20L19 17V20H6Z" fill="#d6202f" stroke="#fff" />
      <path d="M16 12Q9 19 8.500 15Q9 10 16 17" fill="none" stroke="#fff" strokeWidth="1.500" />
    </svg>
  ),
  Explorer: (
    <svg width="29" height="29" viewBox="0 0 29 29">
      <path d="M1 4L4 2H10L12 4H27V24H2Z" fill="#e5d47c" stroke="#c2a94c" />
      <path d="M2 8H28V25H2Z" fill="#f5eaa3" />
      <path d="M5 5H9M15 5H18" stroke="#2e7ab8" strokeWidth="2" />
      <path d="M6 28V18H24V28H20V22H10V28Z" fill="#8fcfee" stroke="#4a9fca" />
    </svg>
  ),
};

const TaskRow = () => (
  <Taskbar>
    <StartButton aria-label="Start">
      <svg width="33" height="33" viewBox="0 0 33 33">
        <defs>
          <radialGradient id="orb" cy=".9">
            <stop offset="0" stopColor="#4fd0f4" />
            <stop offset=".7" stopColor="#1c5f90" />
            <stop offset="1" stopColor="#5f8296" />
          </radialGradient>
        </defs>
        <circle cx="16.500" cy="16.500" r="16" fill="url(#orb)" stroke="#c3d4dc" />
        <path d="M9 9Q13 6 16 8L15 15Q11 13 8 15Z" fill="#ee5a24" />
        <path d="M18 9Q22 11 26 8L24 15Q20 17 17 15Z" fill="#8ccb3f" />
        <path d="M8 17Q11 15 15 17L14 24Q10 22 6 24Z" fill="#45a8ec" />
        <path d="M17 17Q20 19 24 17L22 24Q19 26 16 24Z" fill="#fccb2c" />
      </svg>
    </StartButton>
    {Object.entries(taskIcons).map(([name, icon]) => (
      <TaskButton key={name} aria-label={name}>{icon}</TaskButton>
    ))}
    <Tray>
      <NetMeter>
        <NetRates>
          <span>D: 0</span>
          <span>U: 0</span>
        </NetRates>
      </NetMeter>
      <span>EN</span>
      <TrayIcons>
        <svg width="8" height="6"><path d="M0 6L4 0L8 6Z" fill="#fff" /></svg>
        <svg width="15" height="14">
          <path d="M1 5H4L8 1V13L4 9H1Z" fill="#eee" stroke="#666" />
          <circle cx="10" cy="9" r="4" fill="#fff" stroke="#d02030" strokeWidth="1.500" />
          <path d="M7 6L13 12" stroke="#d02030" strokeWidth="1.500" />
        </svg>
        <svg width="13" height="15"><path d="M3 2.500H5V.5H8V2.500H10V13.500H3ZM5 5H8V11H5Z" fill="none" stroke="#fff" strokeWidth="1.300" /></svg>
        <svg width="14" height="12"><path d="M1.500 12V9M4.500 12V7M7.500 12V5M10.500 12V3M13 12V0" stroke="#fff" strokeWidth="2" /></svg>
      </TrayIcons>
      <Clock>
        <div>12:24 ميذ</div>
        <div>2022/09/15</div>
      </Clock>
      <ShowDesktop aria-label="Show desktop" />
    </Tray>
    <WordBar>
      <svg width="16" height="15">
        <circle cx="8" cy="8" r="7" fill="#e9f3d8" stroke="#2c6a8c" strokeWidth="1.500" />
        <path d="M5 4Q11 3 11 9L13 14L6 11Q3 8 5 4Z" fill="#62a42c" />
        <circle cx="7" cy="6" r="1.500" fill="#e8c428" />
      </svg>
      <svg width="40" height="12"><path d="M27 2H35M27 5H35L31 10Z" fill="none" stroke="#1c4f8c" /></svg>
      <svg width="12" height="10"><path d="M10 5H2M5 2L2 5L5 8" fill="none" stroke="#1c4f8c" strokeWidth="1.500" /></svg>
      <WordField>Conductor</WordField>
      <svg width="24" height="10"><path d="M4 2V8L1 5Z" fill="#a9c4de" /><path d="M11 2V8L14 5Z" fill="#123" /></svg>
      <svg width="60" height="14">
        <path d="M1 2H12V12H1ZM1 9H12M4 5H6M8 4V7" fill="#eaf3fb" stroke="#1c4f8c" />
        <path d="M17.500 1.500H23V9H17.500ZM20.500 4H26V12H20.500Z" fill="#eaf3fb" stroke="#1c4f8c" />
        <path d="M32 5H35L39 2V12L35 9H32Z" fill="#1c4f8c" />
        <path d="M41 4V10" stroke="#1c4f8c" />
        <circle cx="51" cy="6" r="4" fill="#eaf3fb" stroke="#1c4f8c" />
        <path d="M54 9L58 13" stroke="#1c4f8c" strokeWidth="2" />
      </svg>
    </WordBar>
  </Taskbar>
);

const App = () => {
  const [selected, setSelected] = useState("Perforation");
  return (
    <Window>
      <GlobalStyle />
      <TitleRow />
      <MenuRow />
      <RibbonRow />
      <Workspace>
        <DockTabs>
          <DockTab $first>
            <SwirlIcon size={13} />
            <span>Project browser</span>
          </DockTab>
          <DockTab>
            <svg width="14" height="14">
              <rect x=".5" y=".5" width="13" height="13" fill="#fff" stroke="#2c5fa0" />
              <path d="M2 2H5V12H2Z" fill="#7039b5" />
              <path d="M5 2H9V12H5Z" fill="#f0a030" />
              <path d="M9 2H12V12H9Z" fill="#d83a2c" />
            </svg>
            <span>Zonation</span>
          </DockTab>
        </DockTabs>
        <Tools>
          {toolGroups.map((group) => (
            <div key={group[0].name}>
              {group.map(({ name, on, icon }) => (
                <ToolButton key={name} $on={on} aria-label={name}>
                  <svg width="16" height="16" viewBox="0 0 16 16">{icon}</svg>
                </ToolButton>
              ))}
            </div>
          ))}
        </Tools>
        <ItemPanel>
          <ItemHeading>Casing</ItemHeading>
          <ItemList names={casingItems} selected={selected} onSelect={setSelected} />
          <ItemHeading>Others</ItemHeading>
          <ItemList names={otherItems} selected={selected} onSelect={setSelected} />
        </ItemPanel>
        <Canvas>
          <WellSchematic />
        </Canvas>
        <ScrollTrack>
          <ScrollArrow $up aria-label="Scroll up" />
          <ScrollThumb />
          <ScrollArrow aria-label="Scroll down" />
        </ScrollTrack>
      </Workspace>
      <StatusRow />
      <TaskRow />
    </Window>
  );
};

export default App;
